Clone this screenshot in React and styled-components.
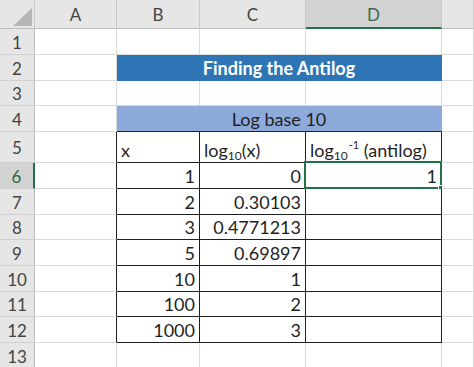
import React from "react";
import styled, { createGlobalStyle } from "styled-components";

const GlobalStyle = createGlobalStyle`
  html, body {
    margin: 0;
    padding: 0;
    background: #ffffff;
    overflow: hidden;
  }
  body {
    font-family: Lato, "Open Sans", "Liberation Sans", sans-serif;
  }
`;

const GRID = "#dadada";
const INK = "#1f1f1f";
const GREEN = "#217346";

const rowHeights = [29, 26, 26, 25, 26, 31, 26, 26, 25, 26, 26, 25, 26, 26];

const Sheet = styled.div`
  display: grid;
  grid-template-columns: 35px 82px 83px 106px 136px 1fr;
  grid-template-rows: ${rowHeights.map((h) => h + "px").join(" ")};
  width: 474px;
  height: 367px;
  overflow: hidden;
  color: ${INK};
  font-size: 17px;
`;

const Corner = styled.div`
  position: relative;
  background: #e6e6e6;
  border-right: 1px solid #c9c9c9;
  border-bottom: 1px solid #bdbdbd;
  box-sizing: border-box;
  & > svg {
    position: absolute;
    left: 13px;
    top: 8px;
  }
`;

const ColHead = styled.div`
  display: flex;
  align-items: center;
  justify-content: center;
  box-sizing: border-box;
  background: ${(p) => (p.$selected ? "#d3d3d3" : "#e6e6e6")};
  color: ${(p) => (p.$selected ? "#3a6a4d" : "#444444")};
  border-right: 1px solid #c9c9c9;
  border-bottom: ${(p) => (p.$selected ? `2px solid ${GREEN}` : "1px solid #bdbdbd")};
  font-size: 17px;
  padding-top: 1px;
`;

const RowHead = styled.div`
  display: flex;
  align-items: center;
  justify-content: center;
  box-sizing: border-box;
  background: ${(p) => (p.$selected ? "#d3d3d3" : "#e6e6e6")};
  color: ${(p) => (p.$selected ? "#2b6a47" : "#444444")};
  border-right: ${(p) => (p.$selected ? `2px solid ${GREEN}` : "1px solid #bdbdbd")};
  border-bottom: 1px solid #d0d0d0;
  font-size: 17px;
  padding-top: 1px;
`;

const Cell = styled.div`
  position: relative;
  display: flex;
  align-items: flex-end;
  justify-content: ${(p) =>
    p.$align === "right" ? "flex-end" : p.$align === "center" ? "center" : "flex-start"};
  grid-column: span ${(p) => p.$span || 1};
  box-sizing: border-box;
  padding: 0 4px 2px 4px;
  white-space: nowrap;
  background: ${(p) => p.$fill || "#ffffff"};
  color: ${(p) => p.$color || INK};
  font-weight: ${(p) => (p.$bold ? 700 : 400)};
  font-size: 18px;
  border-right: 1px solid ${(p) => p.$right || GRID};
  border-bottom: 1px solid ${(p) => p.$bottom || GRID};
  line-height: 20px;
`;

const Text = styled.span`
  sub {
    font-size: 12px;
    vertical-align: -3px;
    line-height: 0;
  }
  sup {
    font-size: 11px;
    vertical-align: 8px;
    line-height: 0;
    margin-left: 1px;
  }
`;

const Selection = styled.div`
  position: absolute;
  left: -2px;
  top: -2px;
  right: -1px;
  bottom: -1px;
  border: 2px solid ${GREEN};
  pointer-events: none;
  & > span {
    position: absolute;
    right: -5px;
    bottom: -5px;
    width: 5px;
    height: 5px;
    background: ${GREEN};
    border: 1px solid #ffffff;
  }
`;

const tableRows = [
  [1, "0"],
  [2, "0.30103"],
  [3, "0.4771213"],
  [5, "0.69897"],
  [10, "1"],
  [100, "2"],
  [1000, "3"],
];

export default function App() {
  const black = INK;
  return (
    <>
      <GlobalStyle />
      <Sheet>
        <Corner>
          <svg width="20" height="19" viewBox="0 0 20 19">
            <polygon points="19,0 19,18 0,18" fill="#b5b5b5" />
          </svg>
        </Corner>
        {["A", "B", "C", "D", ""].map((c) => (
          <ColHead key={c || "E"} $selected={c === "D"}>
            {c}
          </ColHead>
        ))}

        {/* row 1 */}
        <RowHead>1</RowHead>
        <Cell />
        <Cell />
        <Cell />
        <Cell />
        <Cell />

        {/* row 2 */}
        <RowHead>2</RowHead>
        <Cell />
        <Cell $span={3} $align="center" $fill="#2e75b6" $color="#ffffff" $bold $right="#2e75b6" $bottom="#2e75b6">
          <Text>Finding the Antilog</Text>
        </Cell>
        <Cell />

        {/* row 3 */}
        <RowHead>3</RowHead>
        <Cell />
        <Cell />
        <Cell />
        <Cell />
        <Cell />

        {/* row 4 */}
        <RowHead>4</RowHead>
        <Cell />
        <Cell $span={3} $align="center" $fill="#8eaadb" $right="#8eaadb" $bottom={black}>
          <Text>Log base 10</Text>
        </Cell>
        <Cell />

        {/* row 5 */}
        <RowHead>5</RowHead>
        <Cell $right={black} />
        <Cell $right={black} $bottom={black}>
          <Text>x</Text>
        </Cell>
        <Cell $right={black} $bottom={black}>
          <Text>
            log<sub>10</sub>(x)
          </Text>
        </Cell>
        <Cell $right={black} $bottom={black}>
          <Text>
            log<sub>10</sub>
            <sup>-1</sup> (antilog)
          </Text>
        </Cell>
        <Cell />

        {tableRows.map(([x, lg], i) => (
          <React.Fragment key={x}>
            <RowHead $selected={i === 0}>{i + 6}</RowHead>
            <Cell $right={black} />
            <Cell $align="right" $right={black} $bottom={black}>
              <Text>{x}</Text>
            </Cell>
            <Cell $align="right" $right={black} $bottom={black}>
              <Text>{lg}</Text>
            </Cell>
            <Cell $align="right" $right={black} $bottom={black}>
              {i === 0 && <Text>1</Text>}
              {i === 0 && (
                <Selection>
                  <span />
                </Selection>
              )}
            </Cell>
            <Cell />
          </React.Fragment>
        ))}

        {/* row 13 */}
        <RowHead>13</RowHead>
        <Cell />
        <Cell />
        <Cell />
        <Cell />
        <Cell />
      </Sheet>
    </>
  );
}
